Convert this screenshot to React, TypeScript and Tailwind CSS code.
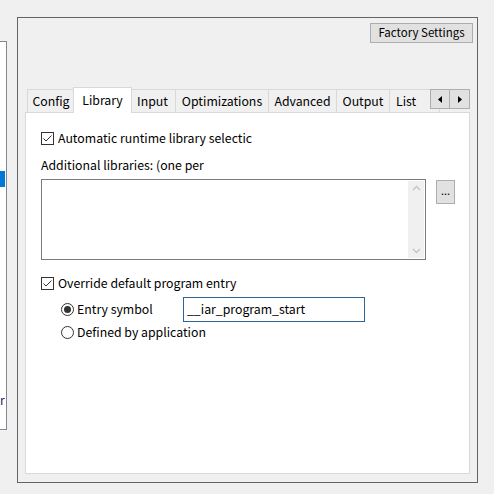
import React from 'react';

const tabs = [
  { label: 'Config', w: 48 },
  { label: 'Library', w: 55, active: true },
  { label: 'Input', w: 46 },
  { label: 'Optimizations', w: 93 },
  { label: 'Advanced', w: 68 },
  { label: 'Output', w: 53 },
  { label: 'List', w: 50 },
];

function CheckBox({ checked }: { checked: boolean }) {
  return (
    <span className="w-[13px] h-[13px] border border-[#333333] bg-white flex items-center justify-center shrink-0">
      {checked && (
        <svg width="11" height="11" viewBox="0 0 11 11">
          <path d="M1.5 5.5 L4 8 L9.5 2.5" fill="none" stroke="#333333" strokeWidth="1" />
        </svg>
      )}
    </span>
  );
}

function Radio({ checked }: { checked: boolean }) {
  return (
    <span className="w-[13px] h-[13px] rounded-full border border-[#333333] bg-white flex items-center justify-center shrink-0">
      {checked && <span className="w-[7px] h-[7px] rounded-full bg-[#333333]" />}
    </span>
  );
}

export default function App() {
  return (
    <div
      className="w-[494px] h-[494px] bg-[#f0f0f0] flex overflow-hidden text-[12.3px] text-black"
      style={{ fontFamily: '"Noto Sans CJK SC", "Noto Sans", sans-serif' }}
    >
      {/* left tree panel, cut off */}
      <div className="w-[7px] h-[389px] mt-[41px] bg-white border-r border-y border-[#828790] relative shrink-0">
        <div className="absolute left-0 top-[129px] w-[5px] h-[16px] bg-[#0078d7]" />
        <div className="absolute left-0 top-[352px] text-[12px] leading-none text-[#1a1a6e]">r</div>
      </div>

      {/* options box */}
      <div className="ml-[10px] mt-[17px] w-[461px] h-[466px] border border-[#646464] flex flex-col shrink-0">
        <div className="flex justify-end pt-[5px] pr-[4px]">
          <button className="w-[103px] h-[20px] bg-[#e1e1e1] border border-[#adadad] text-[11.5px] leading-none">
            Factory Settings
          </button>
        </div>

        <div className="mt-[44px] mx-[7px] flex flex-col flex-1 mb-[8px]">
          {/* tab strip */}
          <div className="relative h-[25px] flex items-end pl-[2px]">
            {tabs.map((t) =>
              t.active ? (
                <div
                  key={t.label}
                  className="h-[26px] -mx-[2px] bg-white border border-b-0 border-[#d9d9d9] relative z-10 -mb-px flex items-start pt-[3px] justify-center"
                  style={{ width: t.w + 4 }}
                >
                  {t.label}
                </div>
              ) : (
                <div
                  key={t.label}
                  className={
                    'h-[23px] bg-[#f0f0f0] border border-b-0 border-l-0 first:border-l border-[#d9d9d9] flex items-center pt-px shrink-0 ' +
                    (t.label === 'List' ? 'pl-[6px]' : 'justify-center')
                  }
                  style={{ width: t.w }}
                >
                  {t.label}
                </div>
              )
            )}
            <div className="absolute right-0 top-[2px] flex z-20">
              <div className="w-[20px] h-[20px] bg-[#e1e1e1] border border-[#adadad] flex items-center justify-center">
                <svg width="5" height="7" viewBox="0 0 5 7"><path d="M4 0 L4 7 L0 3.5 Z" fill="#000" /></svg>
              </div>
              <div className="w-[20px] h-[20px] bg-[#e1e1e1] border border-l-0 border-[#adadad] flex items-center justify-center">
                <svg width="5" height="7" viewBox="0 0 5 7"><path d="M1 0 L1 7 L5 3.5 Z" fill="#000" /></svg>
              </div>
            </div>
          </div>

          {/* tab page */}
          <div className="flex-1 bg-white border border-[#d9d9d9] pl-[15px] pt-[19px]">
            <label className="flex items-center gap-[4px] h-[13px] leading-none">
              <CheckBox checked />
              <span>Automatic runtime library selectic</span>
            </label>

            <div className="mt-[14px] h-[13px] flex items-center leading-none">Additional libraries: (one per</div>

            <div className="flex items-start mt-[7px]">
              <div className="w-[385px] h-[81px] border border-[#7a7a7a] bg-white flex justify-end p-px">
                <div className="w-[16px] bg-[#f0f0f0] flex flex-col justify-between items-center py-[4px]">
                  <svg width="9" height="6" viewBox="0 0 9 6"><path d="M1 5 L4.5 1.5 L8 5" fill="none" stroke="#c2c2c2" strokeWidth="1.3" /></svg>
                  <svg width="9" height="6" viewBox="0 0 9 6"><path d="M1 1 L4.5 4.5 L8 1" fill="none" stroke="#c2c2c2" strokeWidth="1.3" /></svg>
                </div>
              </div>
              <button className="ml-[10px] mt-px w-[19px] h-[24px] bg-[#e1e1e1] border border-[#adadad] text-[11px] leading-none pb-[3px]">
                ...
              </button>
            </div>

            <label className="flex items-center gap-[4px] h-[13px] mt-[17px] leading-none">
              <CheckBox checked />
              <span>Override default program entry</span>
            </label>

            <div className="flex items-center mt-[7px] pl-[20px]">
              <label className="flex items-center gap-[3px] w-[122px] leading-none">
                <Radio checked />
                <span>Entry symbol</span>
              </label>
              <div className="w-[182px] h-[25px] border border-[#2f6497] flex items-center pl-[3px] leading-none">
                __iar_program_start
              </div>
            </div>

            <label className="flex items-center gap-[3px] mt-[4px] pl-[20px] h-[13px] leading-none">
              <Radio checked={false} />
              <span>Defined by application</span>
            </label>
          </div>
        </div>
      </div>
    </div>
  );
}
